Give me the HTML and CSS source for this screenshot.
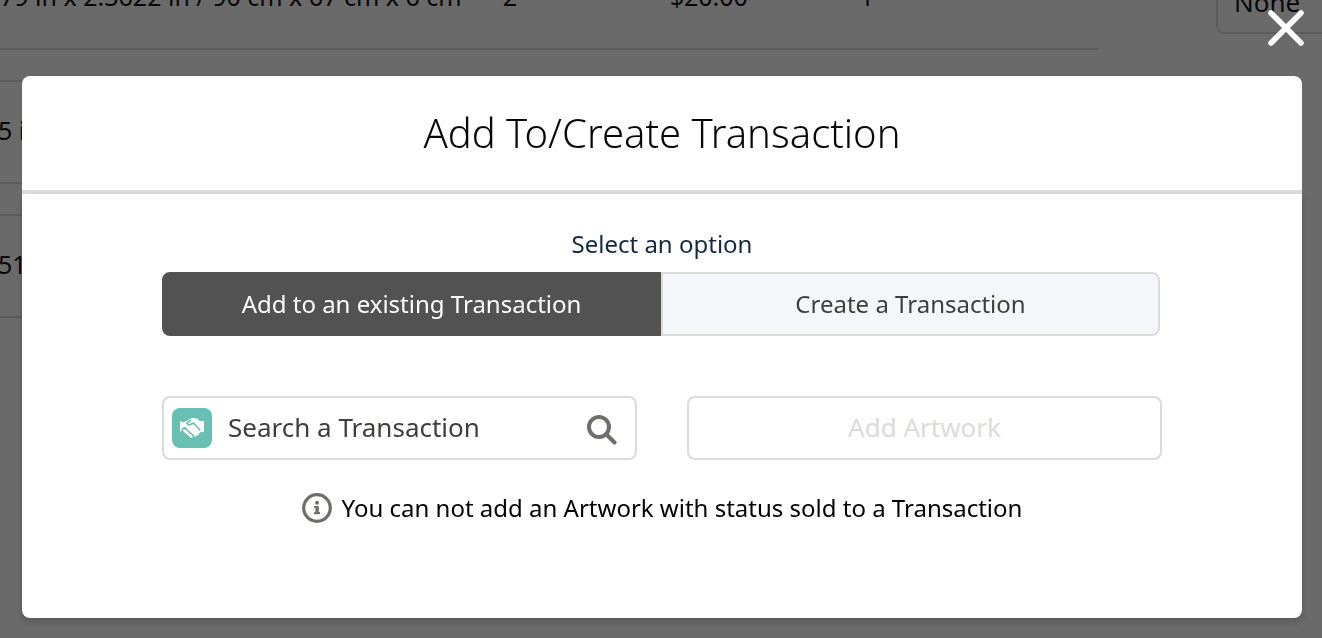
FILE: index.html
```html
<!DOCTYPE html>
<html lang="en">
<head>
    <meta charset="UTF-8">
    <meta name="viewport" content="width=device-width, initial-scale=1.0">
    <title>Add To/Create Transaction</title>
    <link rel="stylesheet" href="styles.css">
</head>
<body>
    <main class="page">
        <table class="artworks">
            <tbody>
                <tr>
                    <td class="size first">79 in x 2.3622 in / 90 cm x 67 cm x 6 cm</td>
                    <td class="edition">2</td>
                    <td class="price">$20.00</td>
                    <td>1</td>
                </tr>
                <tr>
                    <td class="size">5 in</td>
                    <td class="edition"></td>
                    <td class="price"></td>
                    <td></td>
                </tr>
                <tr>
                    <td class="size">51 in</td>
                    <td class="edition"></td>
                    <td class="price"></td>
                    <td></td>
                </tr>
            </tbody>
        </table>
        <aside class="filters">
            <select class="filter" aria-label="Filter">
                <option>None</option>
            </select>
        </aside>
    </main>

    <div class="backdrop">
        <section class="modal" role="dialog" aria-labelledby="modal-title">
            <header class="modal-header">
                <h1 id="modal-title">Add To/Create Transaction</h1>
            </header>
            <div class="modal-content">
                <p class="legend">Select an option</p>
                <div class="options">
                    <button type="button" class="option selected">Add to an existing Transaction</button>
                    <button type="button" class="option">Create a Transaction</button>
                </div>
                <div class="fields">
                    <label class="search">
                        <svg class="deal-icon" viewBox="0 0 40 40" aria-hidden="true">
                            <rect width="40" height="40" rx="8" fill="#6abfb3"/>
                            <path fill="#fff" d="M8 13.200l3.400 1.100 4.200-1.600 2-1.700q2.200-1.300 4.400-.9l2.500.4q1 .2 1.700.9l1.600 1.500H32v10.600l-3.800.7-1.700 2.200-2.300 1.700-1.700.6L13 19l-2.500 3.800L8 23.600z"/>
                            <path fill="none" stroke="#6abfb3" stroke-width="1.600" stroke-linecap="round" stroke-linejoin="round" d="M18.500 12l-3.700 3.300q1.400 2.200 3.800 1.200l2.900-1.500 6.400 7"/>
                            <path fill="none" stroke="#6abfb3" stroke-width="6" stroke-linecap="round" d="M12.600 22.200l6.600 5.800"/>
                            <path fill="none" stroke="#fff" stroke-width="2.600" stroke-linecap="round" d="M12.300 22.600l7 6"/>
                            <path fill="none" stroke="#fff" stroke-width="2" stroke-linecap="round" d="M16 20.800l7 5.800"/>
                        </svg>
                        <input type="text" placeholder="Search a Transaction" aria-label="Search a Transaction">
                        <svg class="search-icon" viewBox="0 0 30 30" aria-hidden="true">
                            <circle cx="12" cy="12" r="10" fill="none" stroke="#706e6b" stroke-width="4"/>
                            <path d="M19 19l8.500 8.500" fill="none" stroke="#706e6b" stroke-width="4" stroke-linecap="round"/>
                        </svg>
                    </label>
                    <button type="button" class="add" disabled>Add Artwork</button>
                </div>
                <p class="note">
                    <svg class="info-icon" viewBox="0 0 30 30" aria-hidden="true">
                        <circle cx="15" cy="15" r="13.300" fill="none" stroke="#706e6b" stroke-width="3.200"/>
                        <circle cx="15" cy="9.700" r="2" fill="#706e6b"/>
                        <path fill="#706e6b" d="M12.600 13h3.600q.6 0 .6.600v5.400h.6q.6 0 .6.600v1q0 .6-.6.600h-4.800q-.6 0-.6-.6v-1q0-.6.600-.6h.8V15h-.8q-.6 0-.6-.6v-.8q0-.6.600-.6z"/>
                    </svg>
                    You can not add an Artwork with status sold to a Transaction
                </p>
            </div>
        </section>
        <button type="button" class="close" aria-label="Close">
            <svg viewBox="0 0 36 36" aria-hidden="true">
                <path d="M3 3l30 30M33 3L3 33" fill="none" stroke="#fff" stroke-width="5.500" stroke-linecap="round"/>
            </svg>
        </button>
    </div>
</body>
</html>
```
FILE: styles.css
```css
* {
    box-sizing: border-box;
}
body {
    margin: 0;
    overflow: hidden;
    font-family: "Noto Sans", "Open Sans", sans-serif;
    font-size: 24px;
    color: #080707;
    background: #fff;
}
h1, p {
    margin: 0;
    font-weight: 400;
}
button, input, select {
    font-family: inherit;
    font-size: inherit;
}

/* artwork list under the dialog */
.page {
    display: flex;
    gap: 118px;
    margin-top: -84px;
    overflow: hidden;
}
.artworks {
    flex: 1;
    border-spacing: 0 30px;
    font-size: 25px;
}
.artworks td {
    height: 104px;
    padding: 0 0 4px;
    border-top: 2px solid #dddbda;
    border-bottom: 2px solid #dddbda;
    white-space: nowrap;
}
.artworks .size {
    width: 499px;
    text-indent: -2px;
}
.artworks .first {
    padding-right: 41px;
    text-align: right;
    text-indent: 0;
}
.artworks .edition {
    width: 167px;
}
.artworks .price {
    width: 190px;
}
.filters {
    width: 106px;
    padding-top: 54px;
}
.filter {
    width: 240px;
    height: 64px;
    padding: 0 16px;
    border: 2px solid #dddbda;
    border-radius: 8px;
    appearance: none;
    font-size: 26px;
    color: inherit;
    background: #fff;
}

/* dialog */
.backdrop {
    position: fixed;
    inset: 0;
    display: flex;
    padding: 76px 20px 20px 22px;
    background: rgba(8, 7, 7, 0.6);
}
.modal {
    flex: 1;
    display: flex;
    flex-direction: column;
}
.modal-header {
    padding: 28px 32px;
    border-bottom: 4px solid #dddbda;
    border-radius: 8px 8px 0 0;
    text-align: center;
    background: #fff;
}
.modal-header h1 {
    font-size: 40px;
    font-weight: 300;
    line-height: 58px;
}
.modal-content {
    flex: 1;
    padding: 32px 140px;
    border-radius: 0 0 8px 8px;
    background: #fff;
    box-shadow: 0 4px 6px rgba(0, 0, 0, 0.16);
}
.legend {
    line-height: 36px;
    margin-bottom: 10px;
    text-align: center;
    color: #16283f;
}
.options {
    display: flex;
    margin-right: 2px;
}
.option {
    flex: 1;
    height: 64px;
    padding: 0 0 2px;
    border: 2px solid #dddbda;
    border-radius: 0 8px 8px 0;
    color: #3e3e3c;
    background: #f4f6f9;
}
.option.selected {
    border-color: #525252;
    border-radius: 8px 0 0 8px;
    color: #fff;
    background: #525252;
}
.fields {
    display: grid;
    grid-template-columns: repeat(2, minmax(0, 1fr));
    gap: 50px;
    margin-top: 60px;
}
.search, .add {
    height: 64px;
    border: 2px solid #dddbda;
    border-radius: 8px;
    font-size: 26px;
    background: #fff;
}
.search {
    display: flex;
    align-items: center;
    padding: 0 18px 0 8px;
}
.search input {
    flex: 1;
    min-width: 0;
    padding: 0 16px 2px;
    border: 0;
    outline: 0;
    background: none;
}
.search input::placeholder {
    color: #3e3e3c;
    opacity: 1;
}
.deal-icon {
    width: 40px;
    height: 40px;
}
.search-icon, .info-icon {
    width: 30px;
    height: 30px;
}
.search-icon {
    margin-top: 4px;
}
.add {
    padding: 0 0 2px;
    color: #dddbda;
}
.note {
    display: flex;
    align-items: center;
    justify-content: center;
    gap: 10px;
    margin-top: 30px;
    line-height: 36px;
    color: #000;
}
.close {
    position: absolute;
    top: 10px;
    right: 18px;
    width: 36px;
    height: 36px;
    padding: 0;
    border: 0;
    background: none;
}
.close svg {
    display: block;
}
```
